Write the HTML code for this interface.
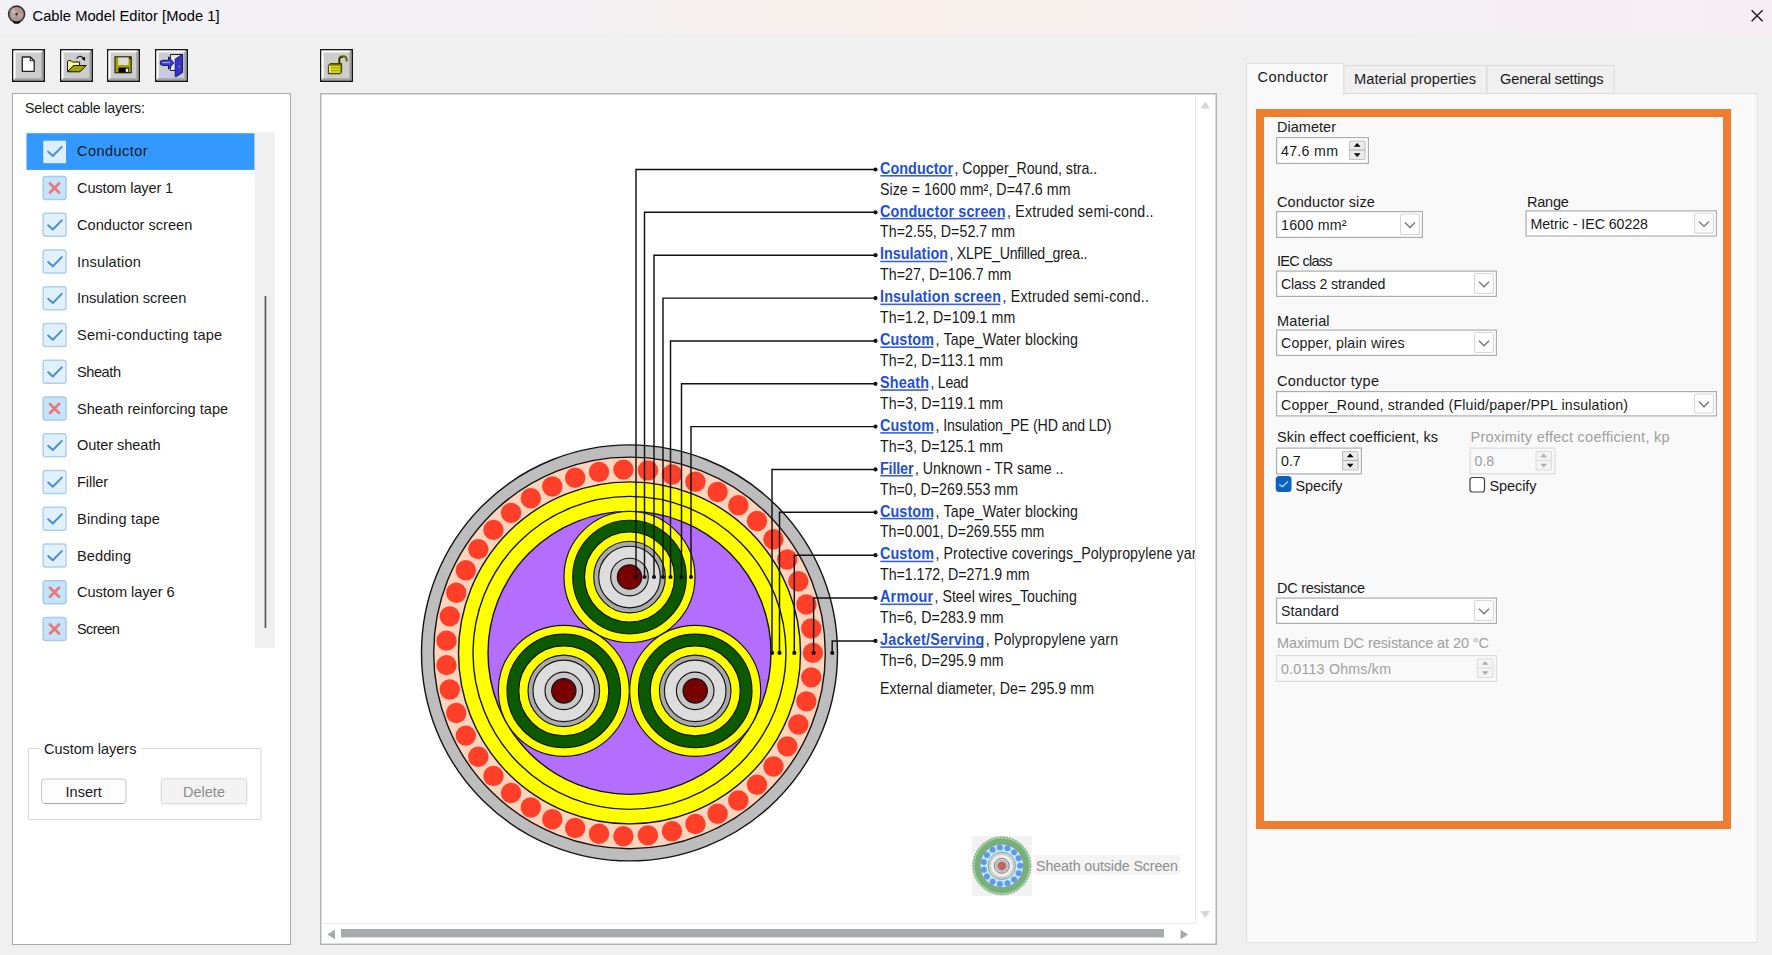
<!DOCTYPE html>
<html><head><meta charset="utf-8"><title>Cable Model Editor</title>
<style>html,body{margin:0;padding:0;width:1772px;height:955px;overflow:hidden;background:#f0f0f0}svg{display:block;font-family:"Liberation Sans", sans-serif}</style>
</head><body><svg width="1772" height="955" viewBox="0 0 1772 955"><defs><linearGradient id="tg" x1="0" x2="1" y1="0" y2="0"><stop offset="0" stop-color="#f2f1f6"/><stop offset="0.3" stop-color="#f3f1f5"/><stop offset="0.42" stop-color="#f7f0ee"/><stop offset="0.51" stop-color="#f9f0eb"/><stop offset="0.62" stop-color="#f7f0ee"/><stop offset="0.76" stop-color="#f4f0f6"/><stop offset="1" stop-color="#f6eef3"/></linearGradient></defs><rect x="0" y="0" width="1772" height="955" fill="#f0f0f0" stroke="none" stroke-width="1" rx="0" /><rect x="0" y="0" width="1772" height="34" fill="url(#tg)" stroke="none" stroke-width="1" rx="0" /><g transform="translate(16.6,14.1)"><circle r="8.8" fill="#2e2e2e"/><circle r="7.2" fill="#9c9c9c"/><circle cx="-2" cy="-3" r="3" fill="#bdbdbd"/><circle cx="0" cy="-4.3" r="2.3" fill="#c99078"/><circle cx="-3.6" cy="1.3" r="2.4" fill="#d49a88"/><circle cx="3.6" cy="1.3" r="2.4" fill="#d49a88"/><circle cx="0" cy="0" r="1.3" fill="#333"/><path d="M-4.5 6.5 Q0 10 4.5 6.5 L3.2 8.8 Q0 10.5 -3.2 8.8Z" fill="#0a0a0a"/><path d="M-8 -2 A8.5 8.5 0 0 1 -3 -8" stroke="#4a7a8a" stroke-width="1" fill="none"/></g><text x="32.5" y="20.6" font-size="14.7" fill="#000" font-weight="normal" textLength="187.0" lengthAdjust="spacing" >Cable Model Editor [Mode 1]</text><path d="M1751.6 10.3 L1762.6 21.3 M1762.6 10.3 L1751.6 21.3" stroke="#1a1a1a" stroke-width="1.35"/><rect x="12.75" y="49.75" width="31.5" height="31.5" fill="#cdcdcd" stroke="#151515" stroke-width="1.5" rx="0" /><path d="M14.5 79.5 V51.5 H42.5" stroke="#fff" stroke-width="2.2" fill="none"/><path d="M14.5 79.3 H42.3 V51.5" stroke="#a2a2a2" stroke-width="2" fill="none"/><rect x="60.75" y="49.75" width="31.5" height="31.5" fill="#cdcdcd" stroke="#151515" stroke-width="1.5" rx="0" /><path d="M62.5 79.5 V51.5 H90.5" stroke="#fff" stroke-width="2.2" fill="none"/><path d="M62.5 79.3 H90.3 V51.5" stroke="#a2a2a2" stroke-width="2" fill="none"/><rect x="107.75" y="49.75" width="31.5" height="31.5" fill="#cdcdcd" stroke="#151515" stroke-width="1.5" rx="0" /><path d="M109.5 79.5 V51.5 H137.5" stroke="#fff" stroke-width="2.2" fill="none"/><path d="M109.5 79.3 H137.3 V51.5" stroke="#a2a2a2" stroke-width="2" fill="none"/><rect x="155.75" y="49.75" width="31.5" height="31.5" fill="#cdcdcd" stroke="#151515" stroke-width="1.5" rx="0" /><path d="M157.5 79.5 V51.5 H185.5" stroke="#fff" stroke-width="2.2" fill="none"/><path d="M157.5 79.3 H185.3 V51.5" stroke="#a2a2a2" stroke-width="2" fill="none"/><rect x="320.75" y="49.75" width="31.5" height="31.5" fill="#cdcdcd" stroke="#151515" stroke-width="1.5" rx="0" /><path d="M322.5 79.5 V51.5 H350.5" stroke="#fff" stroke-width="2.2" fill="none"/><path d="M322.5 79.3 H350.3 V51.5" stroke="#a2a2a2" stroke-width="2" fill="none"/><path d="M22.3 57 H30.3 L34.2 60.8 V71.3 H22.3 Z" fill="#fff" stroke="#222" stroke-width="1.3" stroke-linejoin="round"/><path d="M30.3 57 V60.8 H34.2" fill="none" stroke="#222" stroke-width="1.1"/><path d="M67.5 71.5 V61.6 Q67.5 60.6 68.8 60.6 H71 L72.3 62 H79.6 V65.5 H73.5 L68.5 71.5 Z" fill="#ffff80" stroke="#111" stroke-width="1"/><path d="M67.5 71.8 L73.6 65.5 H86.2 L80 71.8 Z" fill="#a3a300" stroke="#111" stroke-width="1"/><path d="M76.6 58.6 Q79.5 54.6 83 57.6" fill="none" stroke="#222" stroke-width="1.2"/><path d="M81.6 58.6 L85.1 56.8 L84.8 60.9 Z" fill="#000"/><rect x="115" y="56.8" width="16.2" height="16" fill="#a3a300" stroke="#111" stroke-width="1"/><rect x="118.2" y="57.6" width="10.3" height="7.4" fill="#dcdcdc"/><rect x="118.5" y="67.6" width="10.5" height="5" fill="#000"/><rect x="125.7" y="68.6" width="2.6" height="3.3" fill="#eee"/><rect x="129.3" y="57.3" width="1.6" height="1.6" fill="#000"/><path d="M170.4 54.5 H182.5 V70.5 H170.4 Z" fill="#e6e6e6" stroke="#222" stroke-width="1"/><path d="M175.2 59 L182.6 54.2 V72.5 L176.5 76.6 H175.2 Z" fill="#3434c8" stroke="#15156a" stroke-width="0.9"/><circle cx="179.1" cy="66.5" r="0.9" fill="#8a8a60"/><path d="M162.5 60.3 H168.5 V56.8 L173.7 62.9 L168.5 69.2 V65.4 H162.5 Q160.2 65.4 160.2 62.85 Q160.2 60.3 162.5 60.3 Z" fill="#3c3ce0" stroke="#14146a" stroke-width="1"/><path d="M162.5 62.5 H170" stroke="#9a9aff" stroke-width="1.3"/><rect x="160" y="72.9" width="13.7" height="3.7" fill="#c8c8ff"/><path d="M339.2 63.6 V59.5 Q339.2 56.2 343 56.2 Q346.6 56.2 346.6 59.5 V61.6" fill="none" stroke="#6a6a00" stroke-width="2.1"/><path d="M339.6 63 V59.6 Q339.6 57 343 57" fill="none" stroke="#000" stroke-width="0.9"/><path d="M328.3 73.8 V65.6 L330 63.6 H341.6 V72.2 L340.2 73.8 Z" fill="#707000" stroke="#303000" stroke-width="0.9"/><rect x="329.2" y="65.6" width="11.2" height="7.3" fill="#e0e000"/><path d="M330.5 67.9 H340.2 M330.5 70.6 H340.2" stroke="#a8a800" stroke-width="1.2"/><path d="M329.8 65.8 V72.5" stroke="#fff" stroke-width="1"/><rect x="12.5" y="93.5" width="278" height="851" fill="#fff" stroke="#a9a9ab" stroke-width="1" rx="0" /><text x="25" y="112.7" font-size="14.2" fill="#1a1a1a" font-weight="normal" textLength="120.0" lengthAdjust="spacing" >Select cable layers:</text><rect x="255" y="132" width="20" height="516" fill="#f0f0f0" stroke="none" stroke-width="1" rx="0" /><rect x="264.6" y="296" width="1.7" height="332" fill="#5a5a5a" stroke="none" stroke-width="1" rx="0" /><rect x="26.5" y="133.2" width="228" height="36.7" fill="#3399ff" stroke="none" stroke-width="1" rx="0" /><rect x="43.3" y="140.7" width="22.7" height="22.5" fill="#ddeefc" stroke="none" stroke-width="1" rx="0" /><path d="M48.2 151.7 L52.8 156.0 L61.8 146.89999999999998" fill="none" stroke="#4a8fd0" stroke-width="2" stroke-linecap="round" stroke-linejoin="round"/><text x="77" y="156.39999999999998" font-size="14.6" fill="#1a1a1a" font-weight="normal" textLength="70.6" lengthAdjust="spacing" >Conductor</text><rect x="43.1" y="176.54999999999998" width="23" height="23" fill="#c4e4fb" stroke="#a8cce8" stroke-width="1.4" rx="2.5" /><path d="M50.0 183.45 L59.0 192.45 M59.0 183.45 L50.0 192.45" stroke="#e87a7a" stroke-width="2.8" stroke-linecap="round"/><text x="77" y="193.14999999999998" font-size="14.6" fill="#1a1a1a" font-weight="normal" textLength="96.2" lengthAdjust="spacing" >Custom layer 1</text><rect x="43.1" y="213.29999999999998" width="23" height="23" fill="#e0f0fd" stroke="#aed0ee" stroke-width="1.4" rx="2.5" /><path d="M48.2 225.2 L52.8 229.5 L61.8 220.39999999999998" fill="none" stroke="#4a8fd0" stroke-width="2" stroke-linecap="round" stroke-linejoin="round"/><text x="77" y="229.89999999999998" font-size="14.6" fill="#1a1a1a" font-weight="normal" textLength="115.3" lengthAdjust="spacing" >Conductor screen</text><rect x="43.1" y="250.04999999999998" width="23" height="23" fill="#e0f0fd" stroke="#aed0ee" stroke-width="1.4" rx="2.5" /><path d="M48.2 261.95 L52.8 266.25 L61.8 257.15" fill="none" stroke="#4a8fd0" stroke-width="2" stroke-linecap="round" stroke-linejoin="round"/><text x="77" y="266.65" font-size="14.6" fill="#1a1a1a" font-weight="normal" textLength="63.8" lengthAdjust="spacing" >Insulation</text><rect x="43.1" y="286.8" width="23" height="23" fill="#e0f0fd" stroke="#aed0ee" stroke-width="1.4" rx="2.5" /><path d="M48.2 298.7 L52.8 303.0 L61.8 293.9" fill="none" stroke="#4a8fd0" stroke-width="2" stroke-linecap="round" stroke-linejoin="round"/><text x="77" y="303.4" font-size="14.6" fill="#1a1a1a" font-weight="normal" textLength="109.3" lengthAdjust="spacing" >Insulation screen</text><rect x="43.1" y="323.55" width="23" height="23" fill="#e0f0fd" stroke="#aed0ee" stroke-width="1.4" rx="2.5" /><path d="M48.2 335.45 L52.8 339.75 L61.8 330.65" fill="none" stroke="#4a8fd0" stroke-width="2" stroke-linecap="round" stroke-linejoin="round"/><text x="77" y="340.15" font-size="14.6" fill="#1a1a1a" font-weight="normal" textLength="145.2" lengthAdjust="spacing" >Semi-conducting tape</text><rect x="43.1" y="360.3" width="23" height="23" fill="#e0f0fd" stroke="#aed0ee" stroke-width="1.4" rx="2.5" /><path d="M48.2 372.2 L52.8 376.5 L61.8 367.4" fill="none" stroke="#4a8fd0" stroke-width="2" stroke-linecap="round" stroke-linejoin="round"/><text x="77" y="376.9" font-size="14.6" fill="#1a1a1a" font-weight="normal" textLength="44.0" lengthAdjust="spacing" >Sheath</text><rect x="43.1" y="397.05" width="23" height="23" fill="#c4e4fb" stroke="#a8cce8" stroke-width="1.4" rx="2.5" /><path d="M50.0 403.95 L59.0 412.95 M59.0 403.95 L50.0 412.95" stroke="#e87a7a" stroke-width="2.8" stroke-linecap="round"/><text x="77" y="413.65" font-size="14.6" fill="#1a1a1a" font-weight="normal" textLength="151.2" lengthAdjust="spacing" >Sheath reinforcing tape</text><rect x="43.1" y="433.8" width="23" height="23" fill="#e0f0fd" stroke="#aed0ee" stroke-width="1.4" rx="2.5" /><path d="M48.2 445.7 L52.8 450.0 L61.8 440.9" fill="none" stroke="#4a8fd0" stroke-width="2" stroke-linecap="round" stroke-linejoin="round"/><text x="77" y="450.4" font-size="14.6" fill="#1a1a1a" font-weight="normal" textLength="83.5" lengthAdjust="spacing" >Outer sheath</text><rect x="43.1" y="470.55" width="23" height="23" fill="#e0f0fd" stroke="#aed0ee" stroke-width="1.4" rx="2.5" /><path d="M48.2 482.45 L52.8 486.75 L61.8 477.65" fill="none" stroke="#4a8fd0" stroke-width="2" stroke-linecap="round" stroke-linejoin="round"/><text x="77" y="487.15" font-size="14.6" fill="#1a1a1a" font-weight="normal" textLength="31.2" lengthAdjust="spacing" >Filler</text><rect x="43.1" y="507.30000000000007" width="23" height="23" fill="#e0f0fd" stroke="#aed0ee" stroke-width="1.4" rx="2.5" /><path d="M48.2 519.2 L52.8 523.5 L61.8 514.4000000000001" fill="none" stroke="#4a8fd0" stroke-width="2" stroke-linecap="round" stroke-linejoin="round"/><text x="77" y="523.9000000000001" font-size="14.6" fill="#1a1a1a" font-weight="normal" textLength="82.8" lengthAdjust="spacing" >Binding tape</text><rect x="43.1" y="544.0500000000001" width="23" height="23" fill="#e0f0fd" stroke="#aed0ee" stroke-width="1.4" rx="2.5" /><path d="M48.2 555.95 L52.8 560.25 L61.8 551.1500000000001" fill="none" stroke="#4a8fd0" stroke-width="2" stroke-linecap="round" stroke-linejoin="round"/><text x="77" y="560.6500000000001" font-size="14.6" fill="#1a1a1a" font-weight="normal" textLength="54.0" lengthAdjust="spacing" >Bedding</text><rect x="43.1" y="580.8000000000001" width="23" height="23" fill="#c4e4fb" stroke="#a8cce8" stroke-width="1.4" rx="2.5" /><path d="M50.0 587.7 L59.0 596.7 M59.0 587.7 L50.0 596.7" stroke="#e87a7a" stroke-width="2.8" stroke-linecap="round"/><text x="77" y="597.4000000000001" font-size="14.6" fill="#1a1a1a" font-weight="normal" textLength="97.6" lengthAdjust="spacing" >Custom layer 6</text><rect x="43.1" y="617.5500000000001" width="23" height="23" fill="#c4e4fb" stroke="#a8cce8" stroke-width="1.4" rx="2.5" /><path d="M50.0 624.45 L59.0 633.45 M59.0 624.45 L50.0 633.45" stroke="#e87a7a" stroke-width="2.8" stroke-linecap="round"/><text x="77" y="634.1500000000001" font-size="14.6" fill="#1a1a1a" font-weight="normal" textLength="42.9" lengthAdjust="spacing" >Screen</text><rect x="28.5" y="748.5" width="232.5" height="71" fill="none" stroke="#dadada" stroke-width="1" rx="0" /><rect x="40" y="744" width="101.5" height="12" fill="#fff" stroke="none" stroke-width="1" rx="0" /><text x="44" y="754.2" font-size="14.5" fill="#1a1a1a" font-weight="normal" textLength="92.4" lengthAdjust="spacing" >Custom layers</text><rect x="41.5" y="779" width="84.5" height="24.5" fill="#fdfdfd" stroke="#c8c8c8" stroke-width="1" rx="3" /><path d="M44 803.6 H123.5" stroke="#a8a8a8" stroke-width="1"/><text x="83.7" y="797.3" font-size="14.5" fill="#1a1a1a" font-weight="normal" text-anchor="middle">Insert</text><rect x="160" y="777" width="88" height="29" fill="#f6f6f6" stroke="none" stroke-width="1" rx="0" /><rect x="161.5" y="779" width="85" height="24.5" fill="#f3f3f3" stroke="#dcdcdc" stroke-width="1" rx="3" /><text x="204" y="797.3" font-size="14.5" fill="#8c8c8c" font-weight="normal" text-anchor="middle">Delete</text><rect x="320.75" y="93.75" width="895.5" height="850.5" fill="#fff" stroke="#b3b4b6" stroke-width="1.5" rx="0" /><path d="M1195.5 95 V923.5 H322" fill="none" stroke="#e8eaea" stroke-width="1"/><path d="M1200.5 108.5 L1205.3 101.5 L1210 108.5 Z" fill="#d6d6d6"/><path d="M1200.5 911 L1205.3 918 L1210 911 Z" fill="#d6d6d6"/><path d="M335 929.8 L327.3 934.6 L335 939.3 Z" fill="#a5a9ac"/><path d="M1180.5 929.8 L1188.2 934.6 L1180.5 939.3 Z" fill="#a5a9ac"/><rect x="341" y="929" width="823" height="8.4" fill="#a7abae" stroke="none" stroke-width="1" rx="0" /><g stroke="#141414" stroke-width="1.4"><circle cx="629.5" cy="652.9" r="208" fill="#bdbdbd"/><circle cx="629.5" cy="652.9" r="195.8" fill="#ffd4bd"/></g><circle cx="812.90" cy="652.90" r="10.2" fill="#ff3f28"/><circle cx="811.26" cy="628.46" r="10.2" fill="#ff3f28"/><circle cx="806.38" cy="604.45" r="10.2" fill="#ff3f28"/><circle cx="798.35" cy="581.30" r="10.2" fill="#ff3f28"/><circle cx="787.30" cy="559.44" r="10.2" fill="#ff3f28"/><circle cx="773.43" cy="539.24" r="10.2" fill="#ff3f28"/><circle cx="757.00" cy="521.07" r="10.2" fill="#ff3f28"/><circle cx="738.29" cy="505.25" r="10.2" fill="#ff3f28"/><circle cx="717.64" cy="492.07" r="10.2" fill="#ff3f28"/><circle cx="695.42" cy="481.75" r="10.2" fill="#ff3f28"/><circle cx="672.02" cy="474.50" r="10.2" fill="#ff3f28"/><circle cx="647.86" cy="470.42" r="10.2" fill="#ff3f28"/><circle cx="623.37" cy="469.60" r="10.2" fill="#ff3f28"/><circle cx="599.00" cy="472.05" r="10.2" fill="#ff3f28"/><circle cx="575.16" cy="477.73" r="10.2" fill="#ff3f28"/><circle cx="552.30" cy="486.54" r="10.2" fill="#ff3f28"/><circle cx="530.82" cy="498.31" r="10.2" fill="#ff3f28"/><circle cx="511.09" cy="512.85" r="10.2" fill="#ff3f28"/><circle cx="493.48" cy="529.88" r="10.2" fill="#ff3f28"/><circle cx="478.30" cy="549.11" r="10.2" fill="#ff3f28"/><circle cx="465.81" cy="570.18" r="10.2" fill="#ff3f28"/><circle cx="456.25" cy="592.74" r="10.2" fill="#ff3f28"/><circle cx="449.78" cy="616.37" r="10.2" fill="#ff3f28"/><circle cx="446.51" cy="640.65" r="10.2" fill="#ff3f28"/><circle cx="446.51" cy="665.15" r="10.2" fill="#ff3f28"/><circle cx="449.78" cy="689.43" r="10.2" fill="#ff3f28"/><circle cx="456.25" cy="713.06" r="10.2" fill="#ff3f28"/><circle cx="465.81" cy="735.62" r="10.2" fill="#ff3f28"/><circle cx="478.30" cy="756.69" r="10.2" fill="#ff3f28"/><circle cx="493.48" cy="775.92" r="10.2" fill="#ff3f28"/><circle cx="511.09" cy="792.95" r="10.2" fill="#ff3f28"/><circle cx="530.82" cy="807.49" r="10.2" fill="#ff3f28"/><circle cx="552.30" cy="819.26" r="10.2" fill="#ff3f28"/><circle cx="575.16" cy="828.07" r="10.2" fill="#ff3f28"/><circle cx="599.00" cy="833.75" r="10.2" fill="#ff3f28"/><circle cx="623.37" cy="836.20" r="10.2" fill="#ff3f28"/><circle cx="647.86" cy="835.38" r="10.2" fill="#ff3f28"/><circle cx="672.02" cy="831.30" r="10.2" fill="#ff3f28"/><circle cx="695.42" cy="824.05" r="10.2" fill="#ff3f28"/><circle cx="717.64" cy="813.73" r="10.2" fill="#ff3f28"/><circle cx="738.29" cy="800.55" r="10.2" fill="#ff3f28"/><circle cx="757.00" cy="784.73" r="10.2" fill="#ff3f28"/><circle cx="773.43" cy="766.56" r="10.2" fill="#ff3f28"/><circle cx="787.30" cy="746.36" r="10.2" fill="#ff3f28"/><circle cx="798.35" cy="724.50" r="10.2" fill="#ff3f28"/><circle cx="806.38" cy="701.35" r="10.2" fill="#ff3f28"/><circle cx="811.26" cy="677.34" r="10.2" fill="#ff3f28"/><g stroke="#141414" stroke-width="1.4"><circle cx="629.5" cy="652.9" r="171" fill="#ffff00"/><circle cx="629.5" cy="652.9" r="156.5" fill="#ffff00"/><circle cx="629.5" cy="652.9" r="141.5" fill="#b46eff"/></g><g stroke="#141414" stroke-width="1.15"><circle cx="629.50" cy="577.00" r="65.5" fill="#ffff00"/><circle cx="629.50" cy="577.00" r="56.8" fill="#0c5a00"/><circle cx="629.50" cy="577.00" r="45" fill="#ffff00"/><circle cx="629.50" cy="577.00" r="35.8" fill="#aaaaaa"/><circle cx="629.50" cy="577.00" r="30.8" fill="#dddddd"/><circle cx="629.50" cy="577.00" r="18.8" fill="#c8c8c8"/><circle cx="629.50" cy="577.00" r="12.2" fill="#780000"/><circle cx="563.80" cy="690.85" r="65.5" fill="#ffff00"/><circle cx="563.80" cy="690.85" r="56.8" fill="#0c5a00"/><circle cx="563.80" cy="690.85" r="45" fill="#ffff00"/><circle cx="563.80" cy="690.85" r="35.8" fill="#aaaaaa"/><circle cx="563.80" cy="690.85" r="30.8" fill="#dddddd"/><circle cx="563.80" cy="690.85" r="18.8" fill="#c8c8c8"/><circle cx="563.80" cy="690.85" r="12.2" fill="#780000"/><circle cx="695.20" cy="690.85" r="65.5" fill="#ffff00"/><circle cx="695.20" cy="690.85" r="56.8" fill="#0c5a00"/><circle cx="695.20" cy="690.85" r="45" fill="#ffff00"/><circle cx="695.20" cy="690.85" r="35.8" fill="#aaaaaa"/><circle cx="695.20" cy="690.85" r="30.8" fill="#dddddd"/><circle cx="695.20" cy="690.85" r="18.8" fill="#c8c8c8"/><circle cx="695.20" cy="690.85" r="12.2" fill="#780000"/></g><g stroke="#111" stroke-width="1.45" fill="none"><path d="M875 169.5 H636 V577.0"/><path d="M875 212.3 H644.5 V577.0"/><path d="M875 255.2 H654 V577.0"/><path d="M875 298.1 H663 V577.0"/><path d="M875 340.9 H670.5 V577.0"/><path d="M875 383.8 H681.5 V577.0"/><path d="M875 426.6 H691 V577.0"/><path d="M875 469.4 H772 V652.9"/><path d="M875 512.3 H779.5 V652.9"/><path d="M875 555.2 H794.3 V652.9"/><path d="M875 598.0 H813.6 V652.9"/><path d="M875 640.9 H832.2 V652.9"/></g><g fill="#111"><circle cx="875.5" cy="169.5" r="2.1"/><circle cx="636" cy="577.0" r="2.1"/><circle cx="875.5" cy="212.3" r="2.1"/><circle cx="644.5" cy="577.0" r="2.1"/><circle cx="875.5" cy="255.2" r="2.1"/><circle cx="654" cy="577.0" r="2.1"/><circle cx="875.5" cy="298.1" r="2.1"/><circle cx="663" cy="577.0" r="2.1"/><circle cx="875.5" cy="340.9" r="2.1"/><circle cx="670.5" cy="577.0" r="2.1"/><circle cx="875.5" cy="383.8" r="2.1"/><circle cx="681.5" cy="577.0" r="2.1"/><circle cx="875.5" cy="426.6" r="2.1"/><circle cx="691" cy="577.0" r="2.1"/><circle cx="875.5" cy="469.4" r="2.1"/><circle cx="772" cy="652.9" r="2.1"/><circle cx="875.5" cy="512.3" r="2.1"/><circle cx="779.5" cy="652.9" r="2.1"/><circle cx="875.5" cy="555.2" r="2.1"/><circle cx="794.3" cy="652.9" r="2.1"/><circle cx="875.5" cy="598.0" r="2.1"/><circle cx="813.6" cy="652.9" r="2.1"/><circle cx="875.5" cy="640.9" r="2.1"/><circle cx="832.2" cy="652.9" r="2.1"/></g><clipPath id="cc"><rect x="322" y="95" width="873" height="828"/></clipPath><g clip-path="url(#cc)"><text transform="translate(880.00,173.70) scale(1,1.12)" x="0" y="0" font-size="14.4" fill="#1e50d8" font-weight="bold" textLength="73.0" lengthAdjust="spacing" >Conductor</text><rect x="880.3" y="175.0" width="72" height="1.6" fill="#3a62d8" stroke="none" stroke-width="1" rx="0" /><text transform="translate(954.50,173.70) scale(1,1.12)" x="0" y="0" font-size="14.2" fill="#1a1a1a" font-weight="normal" textLength="142.7" lengthAdjust="spacing" >, Copper_Round, stra..</text><text transform="translate(880.00,194.60) scale(1,1.12)" x="0" y="0" font-size="14.2" fill="#1a1a1a" font-weight="normal" textLength="190.5" lengthAdjust="spacing" >Size = 1600 mm², D=47.6 mm</text><text transform="translate(880.00,216.55) scale(1,1.12)" x="0" y="0" font-size="14.4" fill="#1e50d8" font-weight="bold" textLength="125.5" lengthAdjust="spacing" >Conductor screen</text><rect x="880.3" y="217.85" width="124.5" height="1.6" fill="#3a62d8" stroke="none" stroke-width="1" rx="0" /><text transform="translate(1007.00,216.55) scale(1,1.12)" x="0" y="0" font-size="14.2" fill="#1a1a1a" font-weight="normal" textLength="146.5" lengthAdjust="spacing" >, Extruded semi-cond..</text><text transform="translate(880.00,237.45) scale(1,1.12)" x="0" y="0" font-size="14.2" fill="#1a1a1a" font-weight="normal" textLength="135.0" lengthAdjust="spacing" >Th=2.55, D=52.7 mm</text><text transform="translate(880.00,259.40) scale(1,1.12)" x="0" y="0" font-size="14.4" fill="#1e50d8" font-weight="bold" textLength="68.0" lengthAdjust="spacing" >Insulation</text><rect x="880.3" y="260.7" width="67" height="1.6" fill="#3a62d8" stroke="none" stroke-width="1" rx="0" /><text transform="translate(949.50,259.40) scale(1,1.12)" x="0" y="0" font-size="14.2" fill="#1a1a1a" font-weight="normal" textLength="138.0" lengthAdjust="spacing" >, XLPE_Unfilled_grea..</text><text transform="translate(880.00,280.30) scale(1,1.12)" x="0" y="0" font-size="14.2" fill="#1a1a1a" font-weight="normal" textLength="131.4" lengthAdjust="spacing" >Th=27, D=106.7 mm</text><text transform="translate(880.00,302.25) scale(1,1.12)" x="0" y="0" font-size="14.4" fill="#1e50d8" font-weight="bold" textLength="121.0" lengthAdjust="spacing" >Insulation screen</text><rect x="880.3" y="303.55" width="120" height="1.6" fill="#3a62d8" stroke="none" stroke-width="1" rx="0" /><text transform="translate(1002.50,302.25) scale(1,1.12)" x="0" y="0" font-size="14.2" fill="#1a1a1a" font-weight="normal" textLength="146.4" lengthAdjust="spacing" >, Extruded semi-cond..</text><text transform="translate(880.00,323.15) scale(1,1.12)" x="0" y="0" font-size="14.2" fill="#1a1a1a" font-weight="normal" textLength="135.3" lengthAdjust="spacing" >Th=1.2, D=109.1 mm</text><text transform="translate(880.00,345.10) scale(1,1.12)" x="0" y="0" font-size="14.4" fill="#1e50d8" font-weight="bold" textLength="54.0" lengthAdjust="spacing" >Custom</text><rect x="880.3" y="346.40000000000003" width="53" height="1.6" fill="#3a62d8" stroke="none" stroke-width="1" rx="0" /><text transform="translate(935.50,345.10) scale(1,1.12)" x="0" y="0" font-size="14.2" fill="#1a1a1a" font-weight="normal" textLength="142.5" lengthAdjust="spacing" >, Tape_Water blocking</text><text transform="translate(880.00,366.00) scale(1,1.12)" x="0" y="0" font-size="14.2" fill="#1a1a1a" font-weight="normal" textLength="123.0" lengthAdjust="spacing" >Th=2, D=113.1 mm</text><text transform="translate(880.00,387.95) scale(1,1.12)" x="0" y="0" font-size="14.4" fill="#1e50d8" font-weight="bold" textLength="49.0" lengthAdjust="spacing" >Sheath</text><rect x="880.3" y="389.25" width="48" height="1.6" fill="#3a62d8" stroke="none" stroke-width="1" rx="0" /><text transform="translate(930.50,387.95) scale(1,1.12)" x="0" y="0" font-size="14.2" fill="#1a1a1a" font-weight="normal" textLength="38.0" lengthAdjust="spacing" >, Lead</text><text transform="translate(880.00,408.85) scale(1,1.12)" x="0" y="0" font-size="14.2" fill="#1a1a1a" font-weight="normal" textLength="123.0" lengthAdjust="spacing" >Th=3, D=119.1 mm</text><text transform="translate(880.00,430.80) scale(1,1.12)" x="0" y="0" font-size="14.4" fill="#1e50d8" font-weight="bold" textLength="54.0" lengthAdjust="spacing" >Custom</text><rect x="880.3" y="432.1" width="53" height="1.6" fill="#3a62d8" stroke="none" stroke-width="1" rx="0" /><text transform="translate(935.50,430.80) scale(1,1.12)" x="0" y="0" font-size="14.2" fill="#1a1a1a" font-weight="normal" textLength="176.0" lengthAdjust="spacing" >, Insulation_PE (HD and LD)</text><text transform="translate(880.00,451.70) scale(1,1.12)" x="0" y="0" font-size="14.2" fill="#1a1a1a" font-weight="normal" textLength="123.0" lengthAdjust="spacing" >Th=3, D=125.1 mm</text><text transform="translate(880.00,473.65) scale(1,1.12)" x="0" y="0" font-size="14.4" fill="#1e50d8" font-weight="bold" textLength="33.5" lengthAdjust="spacing" >Filler</text><rect x="880.3" y="474.95" width="32.5" height="1.6" fill="#3a62d8" stroke="none" stroke-width="1" rx="0" /><text transform="translate(915.00,473.65) scale(1,1.12)" x="0" y="0" font-size="14.2" fill="#1a1a1a" font-weight="normal" textLength="148.5" lengthAdjust="spacing" >, Unknown - TR same ..</text><text transform="translate(880.00,494.55) scale(1,1.12)" x="0" y="0" font-size="14.2" fill="#1a1a1a" font-weight="normal" textLength="138.0" lengthAdjust="spacing" >Th=0, D=269.553 mm</text><text transform="translate(880.00,516.50) scale(1,1.12)" x="0" y="0" font-size="14.4" fill="#1e50d8" font-weight="bold" textLength="54.0" lengthAdjust="spacing" >Custom</text><rect x="880.3" y="517.8" width="53" height="1.6" fill="#3a62d8" stroke="none" stroke-width="1" rx="0" /><text transform="translate(935.50,516.50) scale(1,1.12)" x="0" y="0" font-size="14.2" fill="#1a1a1a" font-weight="normal" textLength="142.5" lengthAdjust="spacing" >, Tape_Water blocking</text><text transform="translate(880.00,537.40) scale(1,1.12)" x="0" y="0" font-size="14.2" fill="#1a1a1a" font-weight="normal" textLength="164.3" lengthAdjust="spacing" >Th=0.001, D=269.555 mm</text><text transform="translate(880.00,559.35) scale(1,1.12)" x="0" y="0" font-size="14.4" fill="#1e50d8" font-weight="bold" textLength="54.0" lengthAdjust="spacing" >Custom</text><rect x="880.3" y="560.65" width="53" height="1.6" fill="#3a62d8" stroke="none" stroke-width="1" rx="0" /><text transform="translate(935.50,559.35) scale(1,1.12)" x="0" y="0" font-size="14.2" fill="#1a1a1a" font-weight="normal" textLength="269.0" lengthAdjust="spacing" >, Protective coverings_Polypropylene yarn</text><text transform="translate(880.00,580.25) scale(1,1.12)" x="0" y="0" font-size="14.2" fill="#1a1a1a" font-weight="normal" textLength="149.6" lengthAdjust="spacing" >Th=1.172, D=271.9 mm</text><text transform="translate(880.00,602.20) scale(1,1.12)" x="0" y="0" font-size="14.4" fill="#1e50d8" font-weight="bold" textLength="53.0" lengthAdjust="spacing" >Armour</text><rect x="880.3" y="603.5" width="52" height="1.6" fill="#3a62d8" stroke="none" stroke-width="1" rx="0" /><text transform="translate(934.50,602.20) scale(1,1.12)" x="0" y="0" font-size="14.2" fill="#1a1a1a" font-weight="normal" textLength="142.4" lengthAdjust="spacing" >, Steel wires_Touching</text><text transform="translate(880.00,623.10) scale(1,1.12)" x="0" y="0" font-size="14.2" fill="#1a1a1a" font-weight="normal" textLength="123.7" lengthAdjust="spacing" >Th=6, D=283.9 mm</text><text transform="translate(880.00,645.05) scale(1,1.12)" x="0" y="0" font-size="14.4" fill="#1e50d8" font-weight="bold" textLength="104.2" lengthAdjust="spacing" >Jacket/Serving</text><rect x="880.3" y="646.3499999999999" width="103.2" height="1.6" fill="#3a62d8" stroke="none" stroke-width="1" rx="0" /><text transform="translate(985.70,645.05) scale(1,1.12)" x="0" y="0" font-size="14.2" fill="#1a1a1a" font-weight="normal" textLength="132.4" lengthAdjust="spacing" >, Polypropylene yarn</text><text transform="translate(880.00,665.95) scale(1,1.12)" x="0" y="0" font-size="14.2" fill="#1a1a1a" font-weight="normal" textLength="123.7" lengthAdjust="spacing" >Th=6, D=295.9 mm</text><text transform="translate(880.00,693.80) scale(1,1.12)" x="0" y="0" font-size="14.2" fill="#1a1a1a" font-weight="normal" textLength="214.1" lengthAdjust="spacing" >External diameter, De= 295.9 mm</text></g><rect x="972" y="836" width="60" height="60" fill="#f2f2f2" stroke="none" stroke-width="1" rx="0" /><g transform="translate(1001.8,865.8)"><circle r="29" fill="#9ad89a" stroke="#8a8a8a" stroke-width="0.9" stroke-dasharray="2 1.2"/><circle r="27.3" fill="#79b079"/><circle r="21.8" fill="#b4f0f4" stroke="#7a8a7a" stroke-width="0.7"/><circle cx="18.40" cy="0.00" r="3" fill="#6a94e8"/><circle cx="16.81" cy="7.48" r="3" fill="#6a94e8"/><circle cx="12.31" cy="13.67" r="3" fill="#6a94e8"/><circle cx="5.69" cy="17.50" r="3" fill="#6a94e8"/><circle cx="-1.92" cy="18.30" r="3" fill="#6a94e8"/><circle cx="-9.20" cy="15.93" r="3" fill="#6a94e8"/><circle cx="-14.89" cy="10.82" r="3" fill="#6a94e8"/><circle cx="-18.00" cy="3.83" r="3" fill="#6a94e8"/><circle cx="-18.00" cy="-3.83" r="3" fill="#6a94e8"/><circle cx="-14.89" cy="-10.82" r="3" fill="#6a94e8"/><circle cx="-9.20" cy="-15.93" r="3" fill="#6a94e8"/><circle cx="-1.92" cy="-18.30" r="3" fill="#6a94e8"/><circle cx="5.69" cy="-17.50" r="3" fill="#6a94e8"/><circle cx="12.31" cy="-13.67" r="3" fill="#6a94e8"/><circle cx="16.81" cy="-7.48" r="3" fill="#6a94e8"/><circle r="13.6" fill="#e6e6e6" stroke="#8a8a8a" stroke-width="0.9"/><circle r="11.8" fill="#ececec" stroke="#9a9a9a" stroke-width="0.6"/><circle r="7.4" fill="#e0e0e0" stroke="#707070" stroke-width="0.9"/><circle r="5.6" fill="#d8d8d8" stroke="#8a8a8a" stroke-width="0.6"/><circle r="4.4" fill="#c06464"/></g><rect x="1034.5" y="855" width="145.5" height="19.5" fill="#f4f4f4" stroke="none" stroke-width="1" rx="0" /><text x="1036" y="871" font-size="14.2" fill="#8e8e8e" font-weight="normal" textLength="142.0" lengthAdjust="spacing" >Sheath outside Screen</text><rect x="1246.5" y="93.5" width="510.5" height="849" fill="#f9f9f9" stroke="#e2e2e2" stroke-width="1" rx="0" /><rect x="1344" y="65.5" width="142.5" height="28" fill="#f0f0f0" stroke="#dcdcdc" stroke-width="1" rx="0" /><rect x="1487" y="65.5" width="127" height="28" fill="#f0f0f0" stroke="#dcdcdc" stroke-width="1" rx="0" /><rect x="1246.5" y="63.5" width="97" height="31" fill="#f9f9f9" stroke="#e2e2e2" stroke-width="1" rx="0" /><rect x="1247" y="93" width="96" height="3" fill="#f9f9f9" stroke="none" stroke-width="1" rx="0" /><text x="1257.5" y="81.8" font-size="14.7" fill="#1a1a1a" font-weight="normal" textLength="70.4" lengthAdjust="spacing" >Conductor</text><text x="1354" y="84.2" font-size="14.7" fill="#1a1a1a" font-weight="normal" textLength="122.0" lengthAdjust="spacing" >Material properties</text><text x="1500" y="84.2" font-size="14.7" fill="#1a1a1a" font-weight="normal" textLength="103.6" lengthAdjust="spacing" >General settings</text><rect x="1260" y="113" width="467" height="712" fill="none" stroke="#ed7d31" stroke-width="8" rx="0" /><text x="1277" y="132" font-size="14.5" fill="#1a1a1a" font-weight="normal" textLength="59.0" lengthAdjust="spacing" >Diameter</text><rect x="1276.6" y="137.6" width="91.8" height="25.8" fill="#fff" stroke="#abadb0" stroke-width="1.2" rx="0" /><text x="1281" y="155.5" font-size="14.2" fill="#1a1a1a" font-weight="normal" textLength="57.0" lengthAdjust="spacing" >47.6 mm</text><rect x="1349.5" y="141" width="15.5" height="18.5" fill="#ebebeb" stroke="#c4c4c4" stroke-width="1.2" rx="1" /><path d="M1349.5 150.0 H1365" stroke="#b4b4b4" stroke-width="1.2"/><path d="M1353.8 146.8 L1357.2 143.0 L1360.6 146.8 Z M1353.8 153.2 L1357.2 157.0 L1360.6 153.2 Z" fill="#000"/><text x="1277" y="207" font-size="14.5" fill="#1a1a1a" font-weight="normal" textLength="97.8" lengthAdjust="spacing" >Conductor size</text><rect x="1276.6" y="211.6" width="145.8" height="25.8" fill="#fff" stroke="#abadb0" stroke-width="1.2" rx="0" /><text x="1281" y="229.8" font-size="14.2" fill="#1a1a1a" font-weight="normal" textLength="65.6" lengthAdjust="spacing" >1600 mm²</text><rect x="1400.5" y="214" width="19" height="20.5" fill="#fcfcfc" stroke="#d8d8d8" stroke-width="1.1" rx="2" /><path d="M1405 222.5 L1410 227.5 L1415 222.5" fill="none" stroke="#767676" stroke-width="1.3"/><text x="1527" y="207" font-size="14.5" fill="#1a1a1a" font-weight="normal" textLength="41.8" lengthAdjust="spacing" >Range</text><rect x="1526.1" y="210.9" width="190.3" height="25.1" fill="#fff" stroke="#abadb0" stroke-width="1.2" rx="0" /><text x="1530.5" y="229.10000000000002" font-size="14.2" fill="#1a1a1a" font-weight="normal" textLength="117.5" lengthAdjust="spacing" >Metric - IEC 60228</text><rect x="1694.5" y="213.3" width="19" height="19.8" fill="#fcfcfc" stroke="#d8d8d8" stroke-width="1.1" rx="2" /><path d="M1699.0 221.45000000000002 L1704.0 226.45000000000002 L1709.0 221.45000000000002" fill="none" stroke="#767676" stroke-width="1.3"/><text x="1277" y="266" font-size="14.5" fill="#1a1a1a" font-weight="normal" textLength="55.6" lengthAdjust="spacing" >IEC class</text><rect x="1276.6" y="271.1" width="219.8" height="25.3" fill="#fff" stroke="#abadb0" stroke-width="1.2" rx="0" /><text x="1281" y="289.3" font-size="14.2" fill="#1a1a1a" font-weight="normal" textLength="104.3" lengthAdjust="spacing" >Class 2 stranded</text><rect x="1474.5" y="273.5" width="19" height="20.0" fill="#fcfcfc" stroke="#d8d8d8" stroke-width="1.1" rx="2" /><path d="M1479 281.75 L1484 286.75 L1489 281.75" fill="none" stroke="#767676" stroke-width="1.3"/><text x="1277" y="326" font-size="14.5" fill="#1a1a1a" font-weight="normal" textLength="52.6" lengthAdjust="spacing" >Material</text><rect x="1276.6" y="330.1" width="219.8" height="25.3" fill="#fff" stroke="#abadb0" stroke-width="1.2" rx="0" /><text x="1281" y="348.3" font-size="14.2" fill="#1a1a1a" font-weight="normal" textLength="123.7" lengthAdjust="spacing" >Copper, plain wires</text><rect x="1474.5" y="332.5" width="19" height="20.0" fill="#fcfcfc" stroke="#d8d8d8" stroke-width="1.1" rx="2" /><path d="M1479 340.75 L1484 345.75 L1489 340.75" fill="none" stroke="#767676" stroke-width="1.3"/><text x="1277" y="386" font-size="14.5" fill="#1a1a1a" font-weight="normal" textLength="102.0" lengthAdjust="spacing" >Conductor type</text><rect x="1276.6" y="391.6" width="439.8" height="24.3" fill="#fff" stroke="#abadb0" stroke-width="1.2" rx="0" /><text x="1281" y="409.8" font-size="14.2" fill="#1a1a1a" font-weight="normal" textLength="347.0" lengthAdjust="spacing" >Copper_Round, stranded (Fluid/paper/PPL insulation)</text><rect x="1694.5" y="394" width="19" height="19.0" fill="#fcfcfc" stroke="#d8d8d8" stroke-width="1.1" rx="2" /><path d="M1699 401.75 L1704 406.75 L1709 401.75" fill="none" stroke="#767676" stroke-width="1.3"/><text x="1277" y="442" font-size="14.5" fill="#1a1a1a" font-weight="normal" textLength="161.0" lengthAdjust="spacing" >Skin effect coefficient, ks</text><rect x="1276.6" y="448.1" width="84.8" height="25.8" fill="#fff" stroke="#abadb0" stroke-width="1.2" rx="0" /><text x="1281" y="466.0" font-size="14.2" fill="#1a1a1a" font-weight="normal" >0.7</text><rect x="1342.5" y="451.5" width="15.5" height="18.5" fill="#ebebeb" stroke="#c4c4c4" stroke-width="1.2" rx="1" /><path d="M1342.5 460.5 H1358" stroke="#b4b4b4" stroke-width="1.2"/><path d="M1346.8 457.3 L1350.2 453.5 L1353.6 457.3 Z M1346.8 463.7 L1350.2 467.5 L1353.6 463.7 Z" fill="#000"/><rect x="1275.7" y="476.1" width="15.8" height="15.8" fill="#0a62c0" stroke="none" stroke-width="0" rx="3.5" /><path d="M1279.3 484.6 L1282.5 486.6 L1287.8 481.5" fill="none" stroke="#b8d4f4" stroke-width="1.3"/><text x="1295.5" y="491.2" font-size="14.5" fill="#1a1a1a" font-weight="normal" textLength="47.0" lengthAdjust="spacing" >Specify</text><text x="1470.5" y="442" font-size="14.5" fill="#a0a0a0" font-weight="normal" textLength="199.0" lengthAdjust="spacing" >Proximity effect coefficient, kp</text><rect x="1470.1" y="448.1" width="84.8" height="25.8" fill="#f9f9f9" stroke="#dcdcdc" stroke-width="1.2" rx="0" /><text x="1474.5" y="466.0" font-size="14.2" fill="#a0a0a0" font-weight="normal" >0.8</text><rect x="1536.0" y="451.5" width="15.5" height="18.5" fill="#f4f4f4" stroke="#dedede" stroke-width="1.2" rx="1" /><path d="M1536.0 460.5 H1551.5" stroke="#e0e0e0" stroke-width="1.2"/><path d="M1540.3 457.3 L1543.7 453.5 L1547.1 457.3 Z M1540.3 463.7 L1543.7 467.5 L1547.1 463.7 Z" fill="#b0b0b0"/><rect x="1470" y="477.5" width="14.5" height="14.5" fill="#fff" stroke="#404040" stroke-width="1.2" rx="2.5" /><text x="1489.5" y="491.2" font-size="14.5" fill="#1a1a1a" font-weight="normal" textLength="47.0" lengthAdjust="spacing" >Specify</text><text x="1277" y="593" font-size="14.5" fill="#1a1a1a" font-weight="normal" textLength="88.0" lengthAdjust="spacing" >DC resistance</text><rect x="1276.6" y="598.1" width="219.8" height="25.3" fill="#fff" stroke="#abadb0" stroke-width="1.2" rx="0" /><text x="1281" y="616.3" font-size="14.2" fill="#1a1a1a" font-weight="normal" textLength="58.0" lengthAdjust="spacing" >Standard</text><rect x="1474.5" y="600.5" width="19" height="20.0" fill="#fcfcfc" stroke="#d8d8d8" stroke-width="1.1" rx="2" /><path d="M1479 608.75 L1484 613.75 L1489 608.75" fill="none" stroke="#767676" stroke-width="1.3"/><text x="1277" y="647.5" font-size="14.5" fill="#a0a0a0" font-weight="normal" textLength="212.0" lengthAdjust="spacing" >Maximum DC resistance at 20 °C</text><rect x="1276.6" y="655.6" width="219.8" height="25.8" fill="#f9f9f9" stroke="#dcdcdc" stroke-width="1.2" rx="0" /><text x="1281" y="673.5" font-size="14.2" fill="#a0a0a0" font-weight="normal" textLength="110.0" lengthAdjust="spacing" >0.0113 Ohms/km</text><rect x="1477.5" y="659" width="15.5" height="18.5" fill="#f4f4f4" stroke="#dedede" stroke-width="1.2" rx="1" /><path d="M1477.5 668.0 H1493" stroke="#e0e0e0" stroke-width="1.2"/><path d="M1481.8 664.8 L1485.2 661.0 L1488.6 664.8 Z M1481.8 671.2 L1485.2 675.0 L1488.6 671.2 Z" fill="#b0b0b0"/></svg></body></html>
